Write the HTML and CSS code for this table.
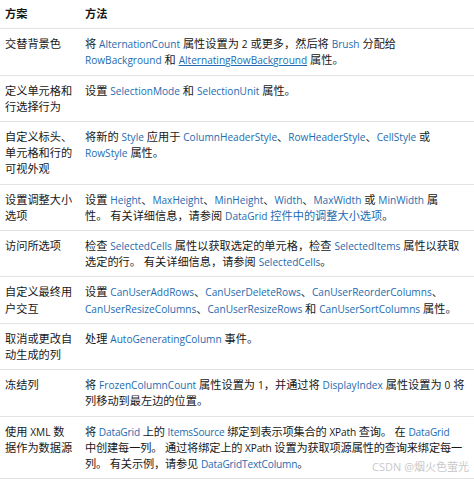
FILE: index.html
```html
<!DOCTYPE html>
<html lang="zh-CN">
<head>
<meta charset="utf-8">
<title>DataGrid 方案</title>
<link rel="stylesheet" href="styles.css">
</head>
<body>
<table class="grid">
  <thead>
    <tr><th class="c1">方案</th><th class="c2">方法</th></tr>
  </thead>
  <tbody>
    <tr><td class="c1">交替背景色</td><td class="c2">将 <a>AlternationCount</a> 属性设置为 <span class="en">2</span> 或更多，然后将 <a>Brush</a> 分配给 <a>RowBackground</a> 和 <a class="hover">AlternatingRowBackground</a> 属性。</td></tr>
    <tr><td class="c1">定义单元格和行选择行为</td><td class="c2">设置 <a>SelectionMode</a> 和 <a>SelectionUnit</a> 属性。</td></tr>
    <tr><td class="c1">自定义标头、单元格和行的可视外观</td><td class="c2">将新的 <a>Style</a> 应用于 <a>ColumnHeaderStyle</a>、<a>RowHeaderStyle</a>、<a>CellStyle</a> 或 <a>RowStyle</a> 属性。</td></tr>
    <tr><td class="c1">设置调整大小选项</td><td class="c2">设置 <a>Height</a>、<a>MaxHeight</a>、<a>MinHeight</a>、<a>Width</a>、<a>MaxWidth</a> 或 <a>MinWidth</a> 属<br>性。 有关详细信息，请参阅 <a class="mix"><span class="en">DataGrid</span> 控件中的调整大小选项</a>。</td></tr>
    <tr><td class="c1">访问所选项</td><td class="c2">检查 <a>SelectedCells</a> 属性以获取选定的单元格，检查 <a>SelectedItems</a> 属性以获取选定的行。 有关详细信息，请参阅 <a>SelectedCells</a>。</td></tr>
    <tr><td class="c1">自定义最终用户交互</td><td class="c2">设置 <a>CanUserAddRows</a>、<a>CanUserDeleteRows</a>、<a>CanUserReorderColumns</a>、<a>CanUserResizeColumns</a>、<a>CanUserResizeRows</a> 和 <a>CanUserSortColumns</a> 属性。</td></tr>
    <tr><td class="c1">取消或更改自动生成的列</td><td class="c2">处理 <a>AutoGeneratingColumn</a> 事件。</td></tr>
    <tr><td class="c1">冻结列</td><td class="c2">将 <a>FrozenColumnCount</a> 属性设置为 <span class="en">1</span>，并通过将 <a>DisplayIndex</a> 属性设置为 <span class="en">0</span> 将列移动到最左边的位置。</td></tr>
    <tr><td class="c1">使用 <span class="en">XML</span> 数据作为数据源</td><td class="c2 tight">将 <a>DataGrid</a> 上的 <a>ItemsSource</a> 绑定到表示项集合的 <span class="en">XPath</span> 查询。 在 <a>DataGrid</a><br>中创建每一列。 通过将绑定上的 <span class="en">XPath</span> 设置为获取项源属性的查询来绑定每一<br>列。 有关示例，请参见 <a>DataGridTextColumn</a>。</td></tr>
  </tbody>
</table>
<div class="watermark">CSDN @烟火色萤光</div>
</body>
</html>
```

FILE: styles.css
```css
html, body {
  margin: 0;
  padding: 0;
  background: #ffffff;
}

body {
  position: relative;
  width: 474px;
  height: 482px;
  overflow: hidden;
  font-family: "Open Sans", "Noto Sans CJK SC", sans-serif;
  font-size: 11.2px;
  line-height: 16.2px;
  color: #171717;
}

.grid {
  width: 474px;
  border-collapse: collapse;
  table-layout: fixed;
}

.grid th,
.grid td {
  text-align: left;
  vertical-align: top;
  padding: 7px 7px 6px 5px;
  border-bottom: 1px solid #e3e3e3;
}

.grid th {
  font-weight: 700;
  padding-top: 6px;
  padding-bottom: 6px;
}

.grid .c1 {
  width: 68px;
  padding-right: 7px;
}

.grid .tight {
  letter-spacing: -0.15px;
  white-space: nowrap;
}

.grid a {
  color: #1e6bb0;
  text-decoration: none;
  font-size: 10.1px;
}

.grid a.mix {
  font-size: 11.2px;
}

.en {
  font-size: 10.1px;
}

.grid a.hover {
  text-decoration: underline;
}

.watermark {
  position: absolute;
  right: 5px;
  bottom: 8px;
  font-size: 11px;
  line-height: 14px;
  color: #c9c9c9;
}
```
